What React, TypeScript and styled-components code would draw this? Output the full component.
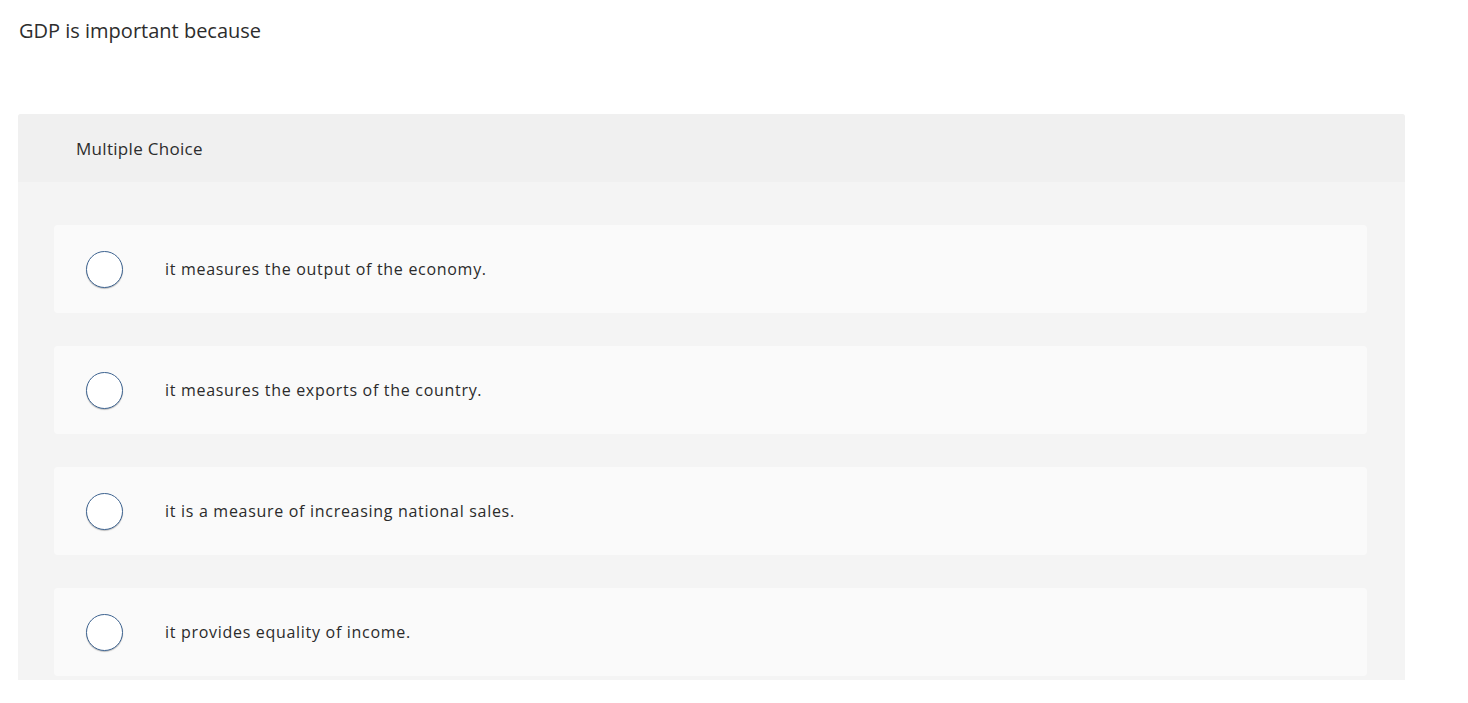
import React from 'react'
import styled, { createGlobalStyle } from 'styled-components'

const GlobalStyle = createGlobalStyle`
    html, body {
        margin: 0;
        padding: 0;
        background: #ffffff;
    }
    body {
        font-family: "Open Sans", Lato, sans-serif;
        color: #2b2b2b;
    }
`

const Page = styled.div`
    width: 1468px;
    height: 703px;
    overflow: hidden;
    padding: 19px 0 0 18px;
    box-sizing: border-box;
`

const Prompt = styled.div`
    font-size: 20px;
    line-height: 24px;
    padding-left: 1px;
    color: #2d2d2d;
    margin-bottom: 71px;
`

const Panel = styled.div`
    width: 1387px;
    border-radius: 3px 3px 0 0;
    background: #f4f4f4;
    overflow: hidden;
`

const PanelHeader = styled.div`
    height: 68px;
    background: #f0f0f0;
    display: flex;
    align-items: center;
    padding-left: 58px;
    font-size: 17px;
    letter-spacing: 0.3px;
    color: #2d2d2d;
`

const Choices = styled.div`
    display: flex;
    flex-direction: column;
    gap: 33px;
    padding: 43px 38px 4px 36px;
`

const Choice = styled.label`
    height: 88px;
    border-radius: 4px;
    background: #fafafa;
    display: flex;
    align-items: center;
    padding-left: 32px;
    cursor: pointer;
`

const Radio = styled.span`
    width: 35px;
    height: 35px;
    border-radius: 50%;
    border: 1.5px solid #3d6390;
    background: #ffffff;
    box-shadow: 0 1px 1px rgba(0, 0, 0, 0.25);
    flex-shrink: 0;
`

const ChoiceText = styled.span`
    margin-left: 42px;
    font-size: 16px;
    letter-spacing: 0.7px;
    color: #2b2b2b;
`

const options = [
    'it measures the output of the economy.',
    'it measures the exports of the country.',
    'it is a measure of increasing national sales.',
    'it provides equality of income.',
]

const App: React.FC = () => {
    return (
        <>
            <GlobalStyle />
            <Page>
                <Prompt>GDP is important because</Prompt>
                <Panel>
                    <PanelHeader>Multiple Choice</PanelHeader>
                    <Choices>
                        {options.map((o) => (
                            <Choice key={o}>
                                <Radio />
                                <ChoiceText>{o}</ChoiceText>
                            </Choice>
                        ))}
                    </Choices>
                </Panel>
            </Page>
        </>
    )
}

export default App
